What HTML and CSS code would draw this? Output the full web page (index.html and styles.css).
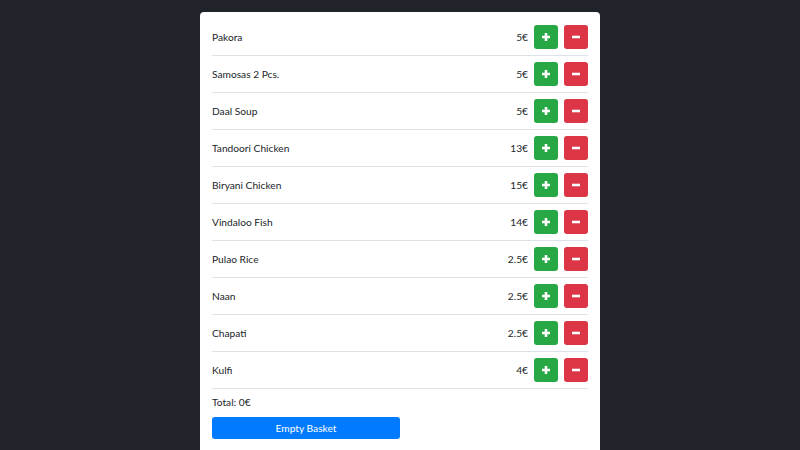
FILE: index.html
```html
<!DOCTYPE html>
<html>
<head>
<meta charset="utf-8">
<link rel="stylesheet" href="styles.css">
</head>
<body>
<div class="card">
  <div class="row"><span class="name">Pakora</span><span class="price">5€</span><button class="btn add"><svg viewBox="0 0 10 10"><path d="M5 1v8M1 5h8"/></svg></button><button class="btn rem"><svg viewBox="0 0 10 10"><path d="M1 5h8"/></svg></button></div>
  <div class="row"><span class="name">Samosas 2 Pcs.</span><span class="price">5€</span><button class="btn add"><svg viewBox="0 0 10 10"><path d="M5 1v8M1 5h8"/></svg></button><button class="btn rem"><svg viewBox="0 0 10 10"><path d="M1 5h8"/></svg></button></div>
  <div class="row"><span class="name">Daal Soup</span><span class="price">5€</span><button class="btn add"><svg viewBox="0 0 10 10"><path d="M5 1v8M1 5h8"/></svg></button><button class="btn rem"><svg viewBox="0 0 10 10"><path d="M1 5h8"/></svg></button></div>
  <div class="row"><span class="name">Tandoori Chicken</span><span class="price">13€</span><button class="btn add"><svg viewBox="0 0 10 10"><path d="M5 1v8M1 5h8"/></svg></button><button class="btn rem"><svg viewBox="0 0 10 10"><path d="M1 5h8"/></svg></button></div>
  <div class="row"><span class="name">Biryani Chicken</span><span class="price">15€</span><button class="btn add"><svg viewBox="0 0 10 10"><path d="M5 1v8M1 5h8"/></svg></button><button class="btn rem"><svg viewBox="0 0 10 10"><path d="M1 5h8"/></svg></button></div>
  <div class="row"><span class="name">Vindaloo Fish</span><span class="price">14€</span><button class="btn add"><svg viewBox="0 0 10 10"><path d="M5 1v8M1 5h8"/></svg></button><button class="btn rem"><svg viewBox="0 0 10 10"><path d="M1 5h8"/></svg></button></div>
  <div class="row"><span class="name">Pulao Rice</span><span class="price">2.5€</span><button class="btn add"><svg viewBox="0 0 10 10"><path d="M5 1v8M1 5h8"/></svg></button><button class="btn rem"><svg viewBox="0 0 10 10"><path d="M1 5h8"/></svg></button></div>
  <div class="row"><span class="name">Naan</span><span class="price">2.5€</span><button class="btn add"><svg viewBox="0 0 10 10"><path d="M5 1v8M1 5h8"/></svg></button><button class="btn rem"><svg viewBox="0 0 10 10"><path d="M1 5h8"/></svg></button></div>
  <div class="row"><span class="name">Chapati</span><span class="price">2.5€</span><button class="btn add"><svg viewBox="0 0 10 10"><path d="M5 1v8M1 5h8"/></svg></button><button class="btn rem"><svg viewBox="0 0 10 10"><path d="M1 5h8"/></svg></button></div>
  <div class="row"><span class="name">Kulfi</span><span class="price">4€</span><button class="btn add"><svg viewBox="0 0 10 10"><path d="M5 1v8M1 5h8"/></svg></button><button class="btn rem"><svg viewBox="0 0 10 10"><path d="M1 5h8"/></svg></button></div>
  <div class="total">Total: 0€</div>
  <button class="empty">Empty Basket</button>
</div>
</body>
</html>
```
FILE: styles.css
```css
html, body {
  margin: 0;
  padding: 0;
  background: #20232a;
  height: 100%;
  overflow: hidden;
}
body {
  font-family: "Lato", "Open Sans", sans-serif;
  font-size: 10.2px;
  color: #212529;
  padding-top: 12px;
}
.card {
  margin: 0 auto;
  background: #fff;
  border-radius: 4px 4px 0 0;
  padding: 7px 12px 0;
  height: 440px;
  box-sizing: border-box;
  width: 400px;
}
.row {
  display: flex;
  align-items: center;
  height: 24px;
  padding: 6px 0;
  border-bottom: 1px solid #dee2e6;
}
.name { flex: 1; margin-top: -1px; }
.price { margin-right: 6px; margin-top: -1px; }
.btn {
  width: 24px;
  height: 24px;
  border: none;
  border-radius: 3px;
  padding: 0;
  display: flex;
  align-items: center;
  justify-content: center;
}
.btn svg {
  width: 10px;
  height: 10px;
  stroke: #fff;
  stroke-width: 2.6;
  fill: none;
}
.add { background: #28a745; }
.rem { background: #dc3545; margin-left: 6px; }
.total {
  margin-top: 6px;
  line-height: 14px;
}
.empty {
  display: block;
  margin-top: 8px;
  width: 188px;
  height: 22px;
  border: none;
  border-radius: 3px;
  background: #007bff;
  color: #fff;
  font-family: "Lato", "Open Sans", sans-serif;
  font-size: 10.2px;
  padding: 0;
}
```
